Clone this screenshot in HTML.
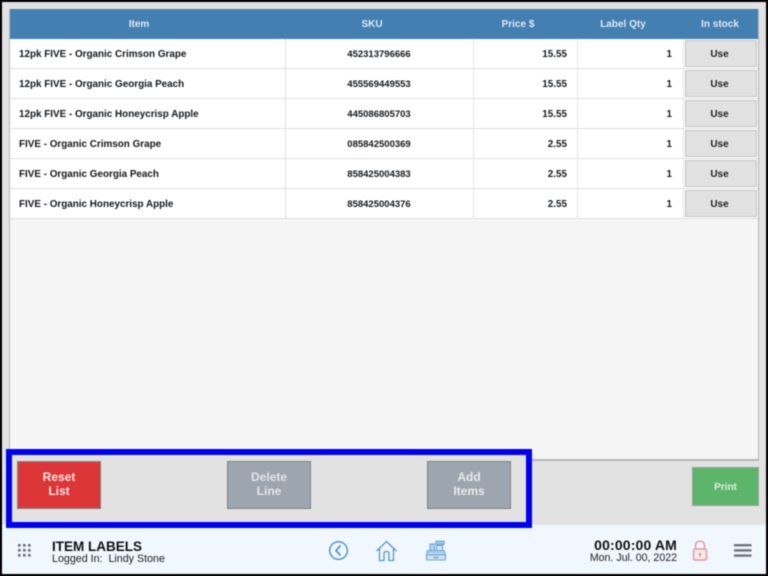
<!DOCTYPE html>
<html><head><meta charset="utf-8"><style>
html,body{margin:0;padding:0;background:#000;}
#p{position:relative;width:768px;height:576px;overflow:hidden;background:#000;font-family:"Liberation Sans",sans-serif;}
#w{position:absolute;left:0;top:0;width:768px;height:576px;filter:blur(.45px);}
.a{position:absolute;}
.t{position:absolute;white-space:nowrap;}
.h{color:#dfe9f3;font-size:10px;font-weight:bold;top:18px;line-height:12px;text-align:center;}
.c{color:#14181c;font-size:9.9px;font-weight:bold;line-height:12px;}
.s{font-size:9.5px;}
.b{position:absolute;box-sizing:border-box;border:1px solid #7f8488;text-align:center;font-weight:bold;font-size:12px;line-height:14px;padding-top:8px;}
.u{position:absolute;left:685px;width:72px;height:27px;box-sizing:border-box;background:#e1e1e1;border:1px solid #c4c4c4;color:#222;font-size:10px;font-weight:bold;text-align:center;line-height:27px;padding-right:3px;}
</style></head><body><div id="p"><div id="w">
<div class="a" style="left:2px;top:2px;width:764px;height:523px;background:#e2e2e2"></div>
<div class="a" style="left:9px;top:9px;width:750px;height:452px;background:#f5f5f5;border-right:1px solid #b5b5b5;border-bottom:2px solid #b5b5b5;box-sizing:border-box"></div>
<div class="a" style="left:9px;top:9px;width:1px;height:452px;background:#b5b5b5"></div>
<div class="a" style="left:10px;top:9px;width:748px;height:30px;background:#447fb2"></div>
<div class="t h" style="left:10px;width:258px;top:19px">Item</div>
<div class="t h" style="left:278px;width:188px;top:19px">SKU</div>
<div class="t h" style="left:473px;width:90px;top:19px">Price $</div>
<div class="t h" style="left:577px;width:92px;top:19px">Label Qty</div>
<div class="t h" style="left:685px;width:70px;top:19px">In stock</div>

<div class="a" style="left:10px;top:39px;width:748px;height:180px;background:#fff"></div>
<div class="a" style="left:10px;top:68px;width:748px;height:1px;background:#dedede"></div>
<div class="a" style="left:10px;top:98px;width:748px;height:1px;background:#dedede"></div>
<div class="a" style="left:10px;top:128px;width:748px;height:1px;background:#dedede"></div>
<div class="a" style="left:10px;top:158px;width:748px;height:1px;background:#dedede"></div>
<div class="a" style="left:10px;top:188px;width:748px;height:1px;background:#dedede"></div>
<div class="a" style="left:10px;top:218px;width:748px;height:1px;background:#dedede"></div>
<div class="a" style="left:285px;top:39px;width:1px;height:180px;background:#dedede"></div>
<div class="a" style="left:473px;top:39px;width:1px;height:180px;background:#e6e6e6"></div>
<div class="a" style="left:577px;top:39px;width:1px;height:180px;background:#e6e6e6"></div>
<div class="a" style="left:683px;top:39px;width:1px;height:180px;background:#e6e6e6"></div>

<div class="t c" style="left:19px;top:49px">12pk FIVE - Organic Crimson Grape</div>
<div class="t c" style="left:19px;top:79px">12pk FIVE - Organic Georgia Peach</div>
<div class="t c" style="left:19px;top:109px">12pk FIVE - Organic Honeycrisp Apple</div>
<div class="t c" style="left:19px;top:139px">FIVE - Organic Crimson Grape</div>
<div class="t c" style="left:19px;top:169px">FIVE - Organic Georgia Peach</div>
<div class="t c" style="left:19px;top:199px">FIVE - Organic Honeycrisp Apple</div>

<div class="t c s" style="left:285px;width:188px;text-align:center;top:49px">452313796666</div>
<div class="t c s" style="left:285px;width:188px;text-align:center;top:79px">455569449553</div>
<div class="t c s" style="left:285px;width:188px;text-align:center;top:109px">445086805703</div>
<div class="t c s" style="left:285px;width:188px;text-align:center;top:139px">085842500369</div>
<div class="t c s" style="left:285px;width:188px;text-align:center;top:169px">858425004383</div>
<div class="t c s" style="left:285px;width:188px;text-align:center;top:199px">858425004376</div>

<div class="t c" style="left:500px;width:67px;text-align:right;top:49px">15.55</div>
<div class="t c" style="left:500px;width:67px;text-align:right;top:79px">15.55</div>
<div class="t c" style="left:500px;width:67px;text-align:right;top:109px">15.55</div>
<div class="t c" style="left:500px;width:67px;text-align:right;top:139px">2.55</div>
<div class="t c" style="left:500px;width:67px;text-align:right;top:169px">2.55</div>
<div class="t c" style="left:500px;width:67px;text-align:right;top:199px">2.55</div>

<div class="t c" style="left:600px;width:72px;text-align:right;top:49px">1</div>
<div class="t c" style="left:600px;width:72px;text-align:right;top:79px">1</div>
<div class="t c" style="left:600px;width:72px;text-align:right;top:109px">1</div>
<div class="t c" style="left:600px;width:72px;text-align:right;top:139px">1</div>
<div class="t c" style="left:600px;width:72px;text-align:right;top:169px">1</div>
<div class="t c" style="left:600px;width:72px;text-align:right;top:199px">1</div>

<div class="u" style="top:40px">Use</div>
<div class="u" style="top:70px">Use</div>
<div class="u" style="top:100px">Use</div>
<div class="u" style="top:130px">Use</div>
<div class="u" style="top:160px">Use</div>
<div class="u" style="top:190px">Use</div>

<div class="a" style="left:5.5px;top:449px;width:526px;height:79px;box-sizing:border-box;border:6px solid #0000f0;background:#e2e2e2"></div>

<div class="b" style="left:17px;top:461px;width:84px;height:48px;background:#dd3639;color:#f4e6e6">Reset<br>List</div>
<div class="b" style="left:227px;top:461px;width:84px;height:48px;background:#9da6ae;color:#e2e5e8">Delete<br>Line</div>
<div class="b" style="left:427px;top:461px;width:84px;height:48px;background:#9da6ae;color:#e8ebed">Add<br>Items</div>
<div class="b" style="left:692px;top:467px;width:67px;height:39px;background:#5cb56a;border-color:#9aa39a;color:#d9f0dc;font-size:10px;padding-top:13px;line-height:14px">Print</div>

<div class="a" style="left:2px;top:525px;width:764px;height:49px;background:#f0f7ff"></div>
<div class="a" style="left:5.5px;top:525px;width:526px;height:3px;background:#0000f0"></div>

<svg class="a" style="left:17px;top:543px" width="16" height="15" fill="#6a6f74">
<rect x="1" y="1" width="2.6" height="2.6"/><rect x="6" y="1" width="2.6" height="2.6"/><rect x="11" y="1" width="2.6" height="2.6"/>
<rect x="1" y="6" width="2.6" height="2.6"/><rect x="6" y="6" width="2.6" height="2.6"/><rect x="11" y="6" width="2.6" height="2.6"/>
<rect x="1" y="11" width="2.6" height="2.6"/><rect x="6" y="11" width="2.6" height="2.6"/><rect x="11" y="11" width="2.6" height="2.6"/>
</svg>

<div class="t" style="left:52px;top:540px;font-size:13.5px;font-weight:bold;line-height:14px;color:#111">ITEM LABELS</div>
<div class="t" style="left:52px;top:553px;font-size:10.7px;line-height:12px;color:#222">Logged In:&nbsp; Lindy Stone</div>

<svg class="a" style="left:328px;top:540px" width="22" height="22" fill="none" stroke="#5596c8" stroke-width="1.5">
<circle cx="10.5" cy="10.5" r="8.8"/><path d="M12.5 5.5 L8 10.5 L12.5 15.5" stroke-width="1.7"/>
</svg>
<svg class="a" style="left:375px;top:540px" width="24" height="22" fill="none" stroke="#5596c8" stroke-width="1.3">
<path d="M1.5 11 L11.5 1.5 L21.5 11"/><path d="M4.5 9 V20.5 H9 V13.5 Q9 11.5 11.5 11.5 Q14 11.5 14 13.5 V20.5 H18.5 V9"/>
</svg>
<svg class="a" style="left:425px;top:540px" width="22" height="22" fill="none" stroke="#6ca6d2" stroke-width="1.1">
<rect x="11" y="1.2" width="8" height="3.2" fill="#a5cbe6"/>
<rect x="5" y="4" width="4.5" height="7" fill="#b5d3ea"/><rect x="11.5" y="5.5" width="6" height="5.5" fill="#d6e7f4"/>
<path d="M14.5 4.5 V5.5"/><path d="M2.5 10.5 H19 L20.5 15 H1.5 Z" fill="#b0d0e8"/>
<rect x="1.5" y="15" width="19" height="5" rx="1" fill="#cfe2f2"/><path d="M8.5 17.5 H13.5" stroke="#4a8fc2"/>
</svg>

<div class="t" style="left:570px;width:107px;text-align:right;top:538px;font-size:14px;font-weight:bold;line-height:15px;color:#111;letter-spacing:.15px">00:00:00 AM</div>
<div class="t" style="left:570px;width:107px;text-align:right;top:552px;font-size:10.6px;line-height:13px;color:#222">Mon. Jul. 00, 2022</div>

<svg class="a" style="left:692px;top:540px" width="16" height="22" fill="none" stroke="#e0979c" stroke-width="1.4">
<path d="M3.5 9 V6 Q3.5 1.2 8 1.2 Q12.5 1.2 12.5 6 V9"/><rect x="1.5" y="9" width="13" height="11" rx="1.5" fill="#fbe9ea"/>
<circle cx="8" cy="14" r="1.3" fill="#e0979c" stroke="none"/><path d="M8 14 V17"/>
</svg>
<svg class="a" style="left:733px;top:543px" width="20" height="16" fill="#70757a">
<rect x="1" y="1" width="17.5" height="2.4"/><rect x="1" y="6.2" width="17.5" height="2.4"/><rect x="1" y="11.4" width="17.5" height="2.4"/>
</svg>
</div></div></body></html>
